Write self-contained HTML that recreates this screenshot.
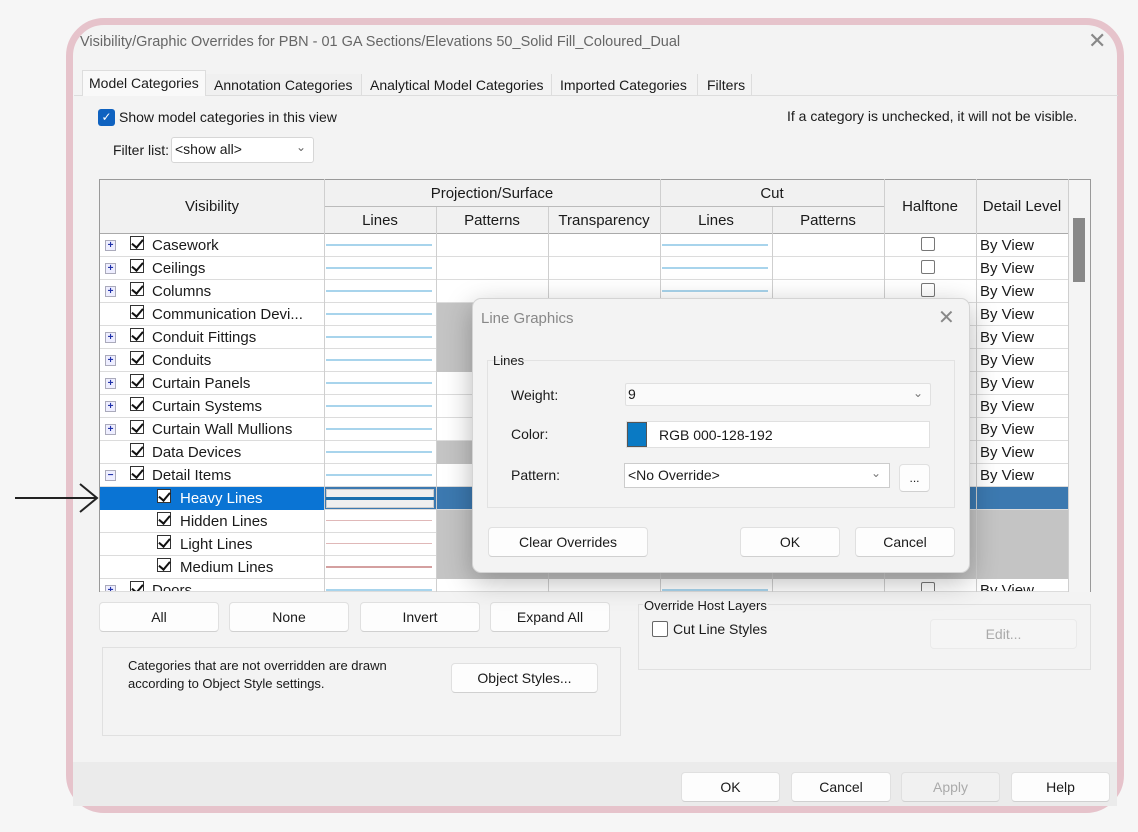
<!DOCTYPE html>
<html><head><meta charset="utf-8"><style>
*{box-sizing:border-box;margin:0;padding:0}
body{width:1138px;height:832px;background:#f6f6f6;font-family:"Liberation Sans",sans-serif;font-size:14px;color:#1a1a1a;position:relative;overflow:hidden}
.a{position:absolute}
.frame{left:66px;top:18px;width:1058px;height:795px;border:7px solid #e6c3cb;border-radius:38px;background:#f3f3f3;overflow:hidden}
.btn{position:absolute;background:#fdfdfd;border:1px solid #e0e0e0;border-bottom-color:#d0d0d0;border-radius:4px;text-align:center;font-size:14px}
.cb{position:absolute;width:14px;height:14px;border:1px solid #333;background:#fff}
.cb:after{content:"";position:absolute;left:3px;top:0px;width:5px;height:9px;border:solid #111;border-width:0 2px 2px 0;transform:rotate(40deg)}
.ucb{position:absolute;width:14px;height:14px;border:1px solid #666;background:#fff;border-radius:2px}
.r{position:absolute;left:100px;width:968px;height:23px;border-bottom:1px solid #dcdcdc;background:#fff}
.nm{position:absolute;top:3px;font-size:15px}
.pl{position:absolute;left:5px;top:6px;width:11px;height:11px;border:1px solid #aab;background:#eef;font-size:10px;line-height:9px;text-align:center;color:#2233aa;font-weight:bold}
.ln{position:absolute;left:226px;top:10px;width:106px;height:2px;background:#a8d4ec}
.ln2{position:absolute;left:562px;top:10px;width:106px;height:2px;background:#a8d4ec}
.g{position:absolute;top:0;height:23px;background:#c4c4c4}
.bv{position:absolute;left:880px;top:3px;font-size:15px}
.hc{position:absolute;left:821px;top:3px;width:14px;height:14px;border:1px solid #777;border-radius:2px;background:#fff}
.vl{position:absolute;top:179px;height:413px;width:1px;background:#cfcfcf}
.hd{position:absolute;text-align:center;font-size:15px}
</style></head><body>
<div class="a frame"></div>
<div class="a" style="left:80px;top:34px;font-size:14.5px;color:#666">Visibility/Graphic Overrides for PBN - 01 GA Sections/Elevations 50_Solid Fill_Coloured_Dual</div>
<div class="a" style="left:1088px;top:28px;font-size:22px;color:#888">✕</div>
<div class="a" style="left:74px;top:95px;width:1044px;height:1px;background:#ddd"></div>
<div class="a" style="left:82px;top:70px;width:124px;height:26px;background:#f9f9f9;border:1px solid #ddd;border-bottom:none"></div>
<div class="a" style="left:89px;top:75px;font-size:14px">Model Categories</div>
<div class="a" style="left:206px;top:74px;width:156px;height:21px;background:#f0f0f0;border-right:1px solid #ddd"></div>
<div class="a" style="left:214px;top:77px;font-size:14px">Annotation Categories</div>
<div class="a" style="left:362px;top:74px;width:190px;height:21px;border-right:1px solid #ddd"></div>
<div class="a" style="left:370px;top:77px;font-size:14px">Analytical Model Categories</div>
<div class="a" style="left:552px;top:74px;width:146px;height:21px;border-right:1px solid #ddd"></div>
<div class="a" style="left:560px;top:77px;font-size:14px">Imported Categories</div>
<div class="a" style="left:698px;top:74px;width:54px;height:21px;border-right:1px solid #ddd"></div>
<div class="a" style="left:707px;top:77px;font-size:14px">Filters</div>
<div class="a" style="left:98px;top:109px;width:17px;height:17px;background:#0f62c0;border-radius:3px;color:#fff;font-size:12px;text-align:center;line-height:17px">✓</div>
<div class="a" style="left:119px;top:109px;font-size:14px">Show model categories in this view</div>
<div class="a" style="left:787px;top:108px;font-size:14px">If a category is unchecked, it will not be visible.</div>
<div class="a" style="left:113px;top:142px;font-size:14px">Filter list:</div>
<div class="a" style="left:171px;top:137px;width:143px;height:26px;background:#fff;border:1px solid #d6d6d6;border-radius:3px"></div>
<div class="a" style="left:175px;top:141px;font-size:14px">&lt;show all&gt;</div>
<div class="a" style="left:296px;top:140px;font-size:12px;color:#666">⌄</div>
<div class="a" style="left:99px;top:179px;width:992px;height:413px;background:#fff;border:1px solid #999;border-bottom:none"></div>
<div class="a" style="left:100px;top:180px;width:968px;height:54px;background:#f1f1f1;border-bottom:1px solid #aaa"></div>
<div class="a" style="left:324px;top:206px;width:560px;height:1px;background:#bbb"></div>
<div class="hd" style="left:100px;top:198px;width:224px">Visibility</div>
<div class="hd" style="left:324px;top:185px;width:336px">Projection/Surface</div>
<div class="hd" style="left:660px;top:185px;width:224px">Cut</div>
<div class="hd" style="left:324px;top:212px;width:112px">Lines</div>
<div class="hd" style="left:436px;top:212px;width:112px">Patterns</div>
<div class="hd" style="left:548px;top:212px;width:112px">Transparency</div>
<div class="hd" style="left:660px;top:212px;width:112px">Lines</div>
<div class="hd" style="left:772px;top:212px;width:112px">Patterns</div>
<div class="hd" style="left:884px;top:198px;width:92px">Halftone</div>
<div class="hd" style="left:976px;top:198px;width:92px">Detail Level</div>
<div class="a" style="left:1068px;top:180px;width:22px;height:412px;background:#f4f4f4"></div>
<div class="a" style="left:1073px;top:218px;width:12px;height:64px;background:#888"></div>

<div class="r" style="top:234px"><div class="pl">+</div><div class="cb" style="left:30px;top:2px"></div><div class="nm" style="left:52px">Casework</div><div class="ln"></div><div class="ln2"></div><div class="hc"></div><div class="bv">By View</div></div>
<div class="r" style="top:257px"><div class="pl">+</div><div class="cb" style="left:30px;top:2px"></div><div class="nm" style="left:52px">Ceilings</div><div class="ln"></div><div class="ln2"></div><div class="hc"></div><div class="bv">By View</div></div>
<div class="r" style="top:280px"><div class="pl">+</div><div class="cb" style="left:30px;top:2px"></div><div class="nm" style="left:52px">Columns</div><div class="ln"></div><div class="ln2"></div><div class="hc"></div><div class="bv">By View</div></div>
<div class="r" style="top:303px"><div class="cb" style="left:30px;top:2px"></div><div class="nm" style="left:52px">Communication Devi...</div><div class="ln"></div><div class="g" style="left:336px;width:112px"></div><div class="bv">By View</div></div>
<div class="r" style="top:326px"><div class="pl">+</div><div class="cb" style="left:30px;top:2px"></div><div class="nm" style="left:52px">Conduit Fittings</div><div class="ln"></div><div class="g" style="left:336px;width:112px"></div><div class="bv">By View</div></div>
<div class="r" style="top:349px"><div class="pl">+</div><div class="cb" style="left:30px;top:2px"></div><div class="nm" style="left:52px">Conduits</div><div class="ln"></div><div class="g" style="left:336px;width:112px"></div><div class="bv">By View</div></div>
<div class="r" style="top:372px"><div class="pl">+</div><div class="cb" style="left:30px;top:2px"></div><div class="nm" style="left:52px">Curtain Panels</div><div class="ln"></div><div class="bv">By View</div></div>
<div class="r" style="top:395px"><div class="pl">+</div><div class="cb" style="left:30px;top:2px"></div><div class="nm" style="left:52px">Curtain Systems</div><div class="ln"></div><div class="bv">By View</div></div>
<div class="r" style="top:418px"><div class="pl">+</div><div class="cb" style="left:30px;top:2px"></div><div class="nm" style="left:52px">Curtain Wall Mullions</div><div class="ln"></div><div class="bv">By View</div></div>
<div class="r" style="top:441px"><div class="cb" style="left:30px;top:2px"></div><div class="nm" style="left:52px">Data Devices</div><div class="ln"></div><div class="g" style="left:336px;width:112px"></div><div class="bv">By View</div></div>
<div class="r" style="top:464px"><div class="pl">−</div><div class="cb" style="left:30px;top:2px"></div><div class="nm" style="left:52px">Detail Items</div><div class="ln"></div><div class="bv">By View</div></div>
<div class="r" style="top:487px;background:#3c79b0"><div class="a" style="left:0;top:0;width:224px;height:23px;background:#0a74d4"></div><div class="cb" style="left:57px;top:2px"></div><div class="nm" style="left:80px;color:#fff">Heavy Lines</div><div class="a" style="left:226px;top:2px;width:108px;height:19px;background:#efefef;border:1px solid #ccc"></div><div class="a" style="left:226px;top:10px;width:108px;height:3px;background:#1a6fae"></div></div>
<div class="r" style="top:510px"><div class="cb" style="left:57px;top:2px"></div><div class="nm" style="left:80px">Hidden Lines</div><div class="a" style="left:226px;top:10px;width:106px;height:1px;background:#e0b8b8"></div><div class="g" style="left:336px;width:632px"></div></div>
<div class="r" style="top:533px"><div class="cb" style="left:57px;top:2px"></div><div class="nm" style="left:80px">Light Lines</div><div class="a" style="left:226px;top:10px;width:106px;height:1px;background:#e0b8b8"></div><div class="g" style="left:336px;width:632px"></div></div>
<div class="r" style="top:556px"><div class="cb" style="left:57px;top:2px"></div><div class="nm" style="left:80px">Medium Lines</div><div class="a" style="left:226px;top:10px;width:106px;height:2px;background:#d4a0a0"></div><div class="g" style="left:336px;width:632px"></div></div>
<div class="r" style="top:579px;height:13px;overflow:hidden"><div class="pl">+</div><div class="cb" style="left:30px;top:2px"></div><div class="nm" style="left:52px">Doors</div><div class="ln"></div><div class="ln2"></div><div class="hc"></div><div class="bv">By View</div></div>

<div class="vl" style="left:324px"></div><div class="vl" style="left:436px;top:207px;height:385px"></div><div class="vl" style="left:548px;top:207px;height:385px"></div><div class="vl" style="left:660px"></div><div class="vl" style="left:772px;top:207px;height:385px"></div><div class="vl" style="left:884px"></div><div class="vl" style="left:976px"></div><div class="vl" style="left:1068px"></div>

<svg class="a" style="left:0;top:480px" width="110" height="40"><path d="M15 18 H96 M80 4 L97 18 L80 32" fill="none" stroke="#222" stroke-width="2"/></svg>

<div class="btn" style="left:99px;top:602px;width:120px;height:30px;line-height:28px">All</div>
<div class="btn" style="left:229px;top:602px;width:120px;height:30px;line-height:28px">None</div>
<div class="btn" style="left:360px;top:602px;width:120px;height:30px;line-height:28px">Invert</div>
<div class="btn" style="left:490px;top:602px;width:120px;height:30px;line-height:28px">Expand All</div>
<div class="a" style="left:638px;top:604px;width:453px;height:66px;border:1px solid #e0e0e0"></div>
<div class="a" style="left:643px;top:598px;font-size:13px;background:#f3f3f3;padding:0 1px">Override Host Layers</div>
<div class="ucb" style="left:652px;top:621px;width:16px;height:16px"></div>
<div class="a" style="left:673px;top:621px;font-size:14px">Cut Line Styles</div>
<div class="btn" style="left:930px;top:619px;width:147px;height:30px;line-height:28px;color:#aaa;background:#f5f5f5;border-color:#eaeaea">Edit...</div>
<div class="a" style="left:102px;top:647px;width:519px;height:89px;border:1px solid #e0e0e0"></div>
<div class="a" style="left:128px;top:657px;font-size:13px;line-height:18px">Categories that are not overridden are drawn<br>according to Object Style settings.</div>
<div class="btn" style="left:451px;top:663px;width:147px;height:30px;line-height:28px">Object Styles...</div>
<div class="a" style="left:73px;top:762px;width:1044px;height:44px;background:#ebebeb"></div>
<div class="btn" style="left:681px;top:772px;width:99px;height:30px;line-height:28px">OK</div>
<div class="btn" style="left:791px;top:772px;width:100px;height:30px;line-height:28px">Cancel</div>
<div class="btn" style="left:901px;top:772px;width:99px;height:30px;line-height:28px;color:#aaa;background:#f1f1f1">Apply</div>
<div class="btn" style="left:1011px;top:772px;width:99px;height:30px;line-height:28px">Help</div>

<div class="a" style="left:472px;top:298px;width:498px;height:275px;background:#f3f3f3;border:1px solid #d4d4d4;border-radius:9px;box-shadow:0 8px 28px rgba(0,0,0,.28)"></div>
<div class="a" style="left:481px;top:310px;font-size:15px;color:#888">Line Graphics</div>
<div class="a" style="left:938px;top:305px;font-size:20px;color:#888">✕</div>
<div class="a" style="left:487px;top:360px;width:468px;height:148px;border:1px solid #e2e2e2"></div>
<div class="a" style="left:493px;top:353px;font-size:13px">Lines</div>
<div class="a" style="left:511px;top:387px;font-size:14px">Weight:</div>
<div class="a" style="left:625px;top:383px;width:306px;height:23px;background:#fafafa;border:1px solid #e0e0e0;border-radius:2px"></div>
<div class="a" style="left:628px;top:386px;font-size:14px">9</div>
<div class="a" style="left:913px;top:386px;font-size:12px;color:#777">⌄</div>
<div class="a" style="left:511px;top:426px;font-size:14px">Color:</div>
<div class="a" style="left:626px;top:421px;width:304px;height:27px;background:#fff;border:1px solid #e0e0e0"></div>
<div class="a" style="left:627px;top:422px;width:20px;height:25px;background:#0a7ac4;border:1px solid #555"></div>
<div class="a" style="left:659px;top:427px;font-size:14px">RGB 000-128-192</div>
<div class="a" style="left:511px;top:467px;font-size:14px">Pattern:</div>
<div class="a" style="left:624px;top:463px;width:266px;height:25px;background:#fff;border:1px solid #ccc"></div>
<div class="a" style="left:628px;top:467px;font-size:14px">&lt;No Override&gt;</div>
<div class="a" style="left:871px;top:466px;font-size:12px;color:#777">⌄</div>
<div class="btn" style="left:899px;top:464px;width:31px;height:28px;line-height:26px;font-size:12px">...</div>
<div class="btn" style="left:488px;top:527px;width:160px;height:30px;line-height:28px">Clear Overrides</div>
<div class="btn" style="left:740px;top:527px;width:100px;height:30px;line-height:28px">OK</div>
<div class="btn" style="left:855px;top:527px;width:100px;height:30px;line-height:28px">Cancel</div>
</body></html>
